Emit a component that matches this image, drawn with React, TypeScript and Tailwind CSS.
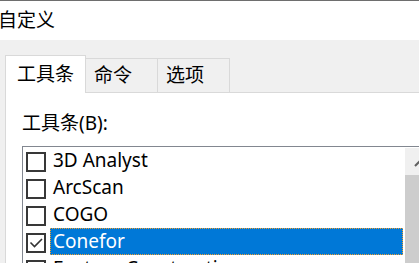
const TOOLBARS = [
  { name: '3D Analyst', checked: false, selected: false },
  { name: 'ArcScan', checked: false, selected: false },
  { name: 'COGO', checked: false, selected: false },
  { name: 'Conefor', checked: true, selected: true },
  { name: 'Feature Construction', checked: false, selected: false },
]

const TABS = ['命令', '选项']

function CheckBox({ checked }: { checked: boolean }) {
  return (
    <div className="w-[20px] h-[20px] border-2 border-[#383838] bg-white flex items-center justify-center shrink-0">
      {checked && (
        <svg width="16" height="16" viewBox="0 0 16 16">
          <polyline points="2.5,7.5 6.5,11.5 14,4" fill="none" stroke="#333" strokeWidth="1.6" />
        </svg>
      )}
    </div>
  )
}

export default function App() {
  return (
    <div
      className="w-[419px] h-[263px] overflow-hidden bg-white flex flex-col text-[19px] text-black"
      style={{ fontFamily: '"Noto Sans", "Noto Sans CJK SC", sans-serif' }}
    >
      <div className="h-[1px] bg-[#6e6e6e] shrink-0" />

      {/* Title */}
      <div className="h-[39px] shrink-0 pt-[6px] -ml-[2px] leading-[26px]">自定义</div>

      {/* Dialog body */}
      <div className="flex-1 flex flex-col bg-[#f0f0f0] pt-[15px]">
        {/* Tabs */}
        <div className="flex items-end h-[38px] pl-[5px] shrink-0">
          <div className="w-[81px] h-[38px] bg-white border-l border-t border-r border-[#d9d9d9] flex items-center justify-center pb-[2px] leading-[26px]">
            工具条
          </div>
          {TABS.map(t => (
            <div
              key={t}
              className="w-[72px] h-[35px] border-t border-r border-b border-[#d9d9d9] flex items-center pl-[8px] pb-[2px] leading-[26px]"
            >
              {t}
            </div>
          ))}
          <div className="flex-1 h-full border-b border-[#d9d9d9]" />
        </div>

        {/* Panel */}
        <div className="flex-1 ml-[5px] bg-white border-l border-[#d9d9d9] pl-[16px] pt-[17px]">
          <div className="leading-[26px]">工具条(B):</div>

          <div className="mt-[10px] w-[420px] border border-[#828790] flex bg-white">
            <div className="w-[382px] shrink-0">
              {TOOLBARS.map(tb => (
                <div key={tb.name} className="h-[27px] flex items-start pt-[5px] pl-[3px]">
                  <CheckBox checked={tb.checked} />
                  <div
                    className={
                      tb.selected
                        ? 'ml-[4px] -mt-[5px] h-[27px] flex-1 mr-[2px] bg-[#0078d7] text-white border border-dotted border-[#f0a030] pl-[2px] leading-[24px] whitespace-nowrap'
                        : 'ml-[4px] -mt-[5px] h-[27px] flex-1 pl-[3px] leading-[26px] whitespace-nowrap'
                    }
                  >
                    {tb.name}
                  </div>
                </div>
              ))}
            </div>

            {/* Scrollbar */}
            <div className="w-[25px] shrink-0 pt-[1px] flex flex-col">
              <div className="h-[27px] bg-[#f0f0f0] flex items-center justify-center pl-[4px] pt-[2px]">
                <svg width="12" height="8" viewBox="0 0 12 8">
                  <polyline points="1,7 6,2 11,7" fill="none" stroke="#606060" strokeWidth="2" />
                </svg>
              </div>
              <div className="flex-1 bg-[#cdcdcd]" />
            </div>
          </div>
        </div>
      </div>
    </div>
  )
}
